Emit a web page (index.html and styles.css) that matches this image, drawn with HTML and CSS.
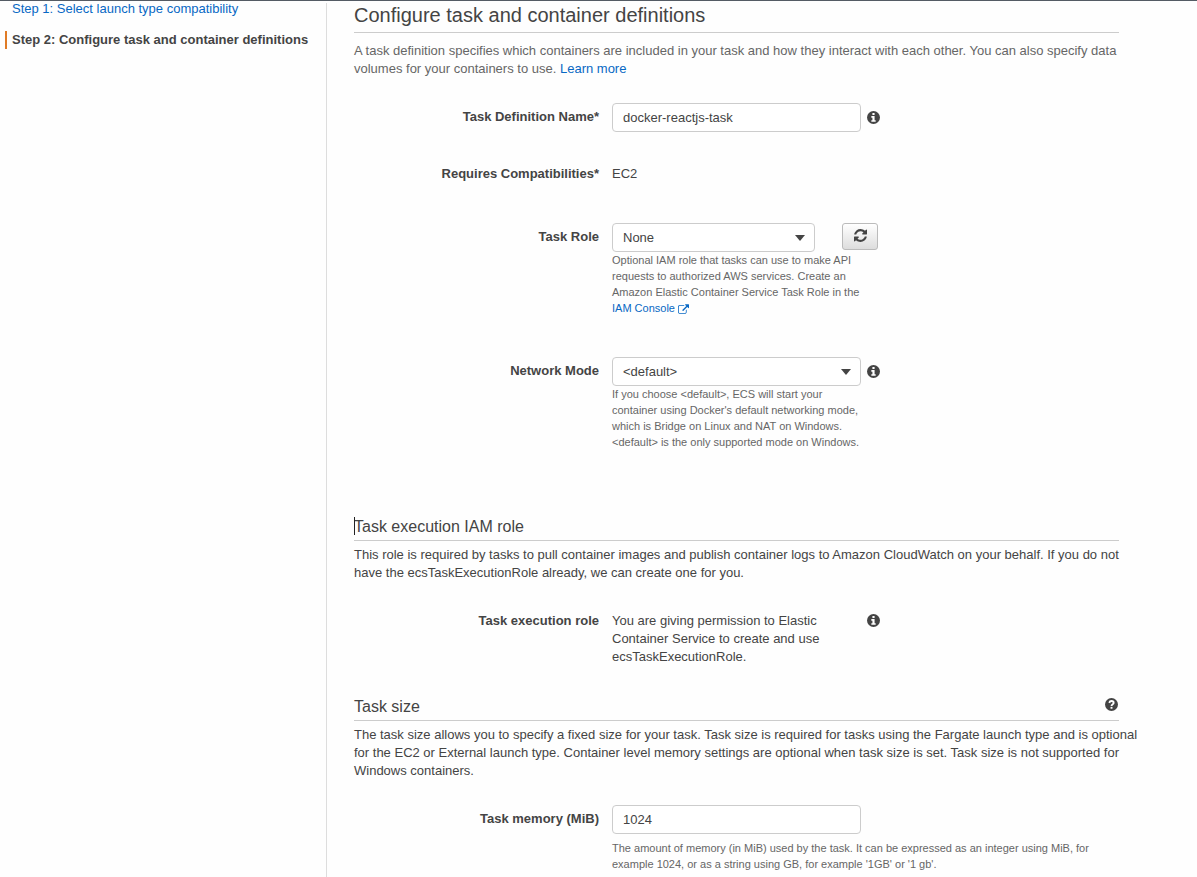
FILE: index.html
```html
<!DOCTYPE html>
<html lang="en">
<head>
<meta charset="UTF-8">
<title>Configure task and container definitions</title>
<link rel="stylesheet" href="styles.css">
</head>
<body>

<!-- shared icons -->
<svg class="icon-defs" aria-hidden="true">
	<symbol id="icon-info" viewBox="0 0 12 12">
		<circle cx="6" cy="6" r="6" fill="currentColor"/>
		<path d="M5 1.800h2v1.900H5zM4 4.700h3v3.800h1V10H4V8.500h1V6.200H4z" fill="#fff"/>
	</symbol>
	<symbol id="icon-help" viewBox="0 0 12 12">
		<circle cx="6" cy="6" r="6" fill="currentColor"/>
		<path d="M3.900 4.500C4.300 3.200 5 2.800 6 2.800c1.200 0 2 .7 2 1.700C8 5.800 6 5.700 6 7.300" fill="none" stroke="#fff" stroke-width="1.700"/>
		<path d="M5.100 8.200h1.800v1.700H5.100z" fill="#fff"/>
	</symbol>
</svg>

<div class="wizard">
	<nav class="steps">
		<a class="step" href="#">Step 1: Select launch type compatibility</a>
		<div class="step current">Step 2: Configure task and container definitions</div>
	</nav>

	<main class="content">
		<h1>Configure task and container definitions</h1>
		<p class="intro">A task definition specifies which containers are included in your task and how they interact with each other. You can also specify data volumes for your containers to use. <a href="#">Learn more</a></p>

		<form>
			<div class="row">
				<label for="name">Task Definition Name*</label>
				<div class="field">
					<input type="text" id="name" value="docker-reactjs-task">
				</div>
				<svg class="icon"><use href="#icon-info"/></svg>
			</div>

			<div class="row row-text">
				<span class="label">Requires Compatibilities*</span>
				<div class="field">EC2</div>
			</div>

			<div class="row row-role">
				<label for="role">Task Role</label>
				<div class="field">
					<div class="role-controls">
						<div class="select">
							<select id="role">
								<option>None</option>
							</select>
						</div>
						<button type="button" class="refresh" aria-label="Refresh">
							<svg viewBox="0 0 1536 1536"><path fill="currentColor" d="M1511 928q0 5-1 7-64 268-268 434.500t-478 166.500q-146 0-282.500-55t-243.500-157l-129 129q-19 19-45 19t-45-19-19-45v-448q0-26 19-45t45-19h448q26 0 45 19t19 45-19 45l-137 137q71 66 161 102t187 36q134 0 250-65t186-179q11-17 53-117 8-23 30-23h192q13 0 22.500 9.500t9.500 22.500zm25-800v448q0 26-19 45t-45 19h-448q-26 0-45-19t-19-45 19-45l138-138q-148-137-349-137-134 0-250 65t-186 179q-11 17-53 117-8 23-30 23h-199q-13 0-22.500-9.500t-9.500-22.500v-7q65-268 270-434.500t480-166.500q146 0 284 55.500t245 156.500l130-129q19-19 45-19t45 19 19 45z"/></svg>
						</button>
					</div>
					<div class="hint">Optional IAM role that tasks can use to make API requests to authorized AWS services. Create an Amazon Elastic Container Service Task Role in the <a href="#">IAM Console <svg class="external" viewBox="0 0 1792 1536"><path fill="currentColor" d="M1408 928v320q0 119-84.500 203.500t-203.500 84.500h-832q-119 0-203.500-84.500t-84.500-203.500v-832q0-119 84.500-203.500t203.500-84.500h704q14 0 23 9t9 23v64q0 14-9 23t-23 9h-704q-66 0-113 47t-47 113v832q0 66 47 113t113 47h832q66 0 113-47t47-113v-320q0-14 9-23t23-9h64q14 0 23 9t9 23zm384-864v512q0 26-19 45t-45 19-45-19l-176-176-652 652q-10 10-23 10t-23-10l-114-114q-10-10-10-23t10-23l652-652-176-176q-19-19-19-45t19-45 45-19h512q26 0 45 19t19 45z"/></svg></a></div>
				</div>
			</div>

			<div class="row">
				<label for="network">Network Mode</label>
				<div class="field">
					<div class="select">
						<select id="network">
							<option>&lt;default&gt;</option>
						</select>
					</div>
					<div class="hint">If you choose &lt;default&gt;, ECS will start your container using Docker's default networking mode, which is Bridge on Linux and NAT on Windows. &lt;default&gt; is the only supported mode on Windows.</div>
				</div>
				<svg class="icon"><use href="#icon-info"/></svg>
			</div>

			<section class="execution">
				<h2 class="caret">Task execution IAM role</h2>
				<p>This role is required by tasks to pull container images and publish container logs to Amazon CloudWatch on your behalf. If you do not have the ecsTaskExecutionRole already, we can create one for you.</p>
				<div class="row row-text">
					<span class="label">Task execution role</span>
					<div class="field permission">You are giving permission to Elastic Container Service to create and use ecsTaskExecutionRole.</div>
					<svg class="icon"><use href="#icon-info"/></svg>
				</div>
			</section>

			<section class="size">
				<h2>Task size <svg class="icon"><use href="#icon-help"/></svg></h2>
				<p>The task size allows you to specify a fixed size for your task. Task size is required for tasks using the Fargate launch type and is optional for the EC2 or External launch type. Container level memory settings are optional when task size is set. Task size is not supported for Windows containers.</p>
				<div class="row">
					<label for="memory">Task memory (MiB)</label>
					<div class="field">
						<input type="text" id="memory" value="1024">
					</div>
					<div class="hint hint-wide">The amount of memory (in MiB) used by the task. It can be expressed as an integer using MiB, for example 1024, or as a string using GB, for example '1GB' or '1 gb'.</div>
				</div>
			</section>
		</form>
	</main>
</div>

</body>
</html>
```
FILE: styles.css
```css
* {
	box-sizing: border-box;
}

body {
	margin: 0;
	border-top: 1px solid #545b64;
	background: #fefefe;
	color: #444;
	font-family: "Liberation Sans", Arial, sans-serif;
	font-size: 13px;
	line-height: 18px;
}

a {
	color: #0868c4;
	text-decoration: none;
}

p {
	margin: 0;
}

.icon-defs {
	position: absolute;
	width: 0;
	height: 0;
}

.wizard {
	display: flex;
	min-height: 100vh;
	padding-top: 2px;
}

/* left step list */
.steps {
	flex: none;
	width: 327px;
	padding-left: 5px;
	border-right: 1px solid #ddd;
}

.step {
	display: block;
	margin: 0 0 16px;
	padding-left: 7px;
	line-height: 12px;
}

.current {
	padding: 3px 0 3px 5px;
	border-left: 2px solid #e07b26;
	font-weight: bold;
}

.content {
	flex: 1;
	margin-right: 78px;
	padding-left: 27px;
}

h1,
h2 {
	margin: 0;
	border-bottom: 1px solid #ccc;
	font-weight: normal;
}

h1 {
	padding-bottom: 5px;
	font-size: 20px;
	line-height: 24px;
}

h2 {
	display: flex;
	justify-content: space-between;
	padding-bottom: 3px;
	font-size: 16px;
	line-height: 20px;
}

.intro {
	margin: 9px 0 25px;
	color: #666;
}

/* form rows */
.row {
	display: grid;
	grid-template-columns: 245px 249px 1fr;
	column-gap: 13px;
}

.row label,
.label {
	padding-top: 5px;
	font-weight: bold;
	text-align: right;
}

.row-text .label {
	padding-top: 0;
}

.row > .icon {
	margin: 8px 0 0 -7px;
}

.row-text > .icon {
	margin-top: 2px;
}

.icon {
	width: 13px;
	height: 13px;
}

h2 .icon {
	margin: 1px 1px 0 0;
}

.row + .row-text {
	margin-top: 33px;
}

.row-role {
	margin: 40px 0 41px;
}

input,
select {
	display: block;
	width: 100%;
	height: 29px;
	padding: 0 10px;
	border: 1px solid #ccc;
	border-radius: 4px;
	background: #fff;
	color: #444;
	font: inherit;
}

select {
	appearance: none;
}

.select {
	position: relative;
	flex: 1;
}

.select::after {
	content: "";
	position: absolute;
	top: 12px;
	right: 10px;
	border: 5px solid transparent;
	border-top: 6px solid #444;
	border-bottom: 0;
	pointer-events: none;
}

.role-controls {
	display: flex;
	gap: 27px;
	margin-right: -17px;
}

.refresh {
	width: 36px;
	height: 27px;
	padding: 0 0 2px;
	border: 1px solid #bbb;
	border-radius: 3px;
	background: linear-gradient(#fff, #ddd);
	color: #444;
}

.refresh svg {
	display: block;
	width: 13px;
	height: 13px;
	margin: 0 auto;
}

.hint {
	color: #666;
	font-size: 11px;
	line-height: 16px;
}

.hint-wide {
	grid-column: 2 / 4;
	max-width: 480px;
	margin-top: 6px;
}

.external {
	width: 11px;
	height: 10px;
	vertical-align: -2px;
}

.execution {
	margin-top: 67px;
}

.size {
	margin-top: 31px;
}

/* section text runs slightly past the heading rule */
section p {
	margin: 5px -20px 25px 0;
}

.execution p {
	margin-bottom: 30px;
}

.permission {
	padding-right: 40px;
}

/* text cursor in front of the heading */
.caret {
	position: relative;
}

.caret::before {
	content: "";
	position: absolute;
	top: 0;
	left: 0;
	width: 1px;
	height: 18px;
	background: #222;
}
```
